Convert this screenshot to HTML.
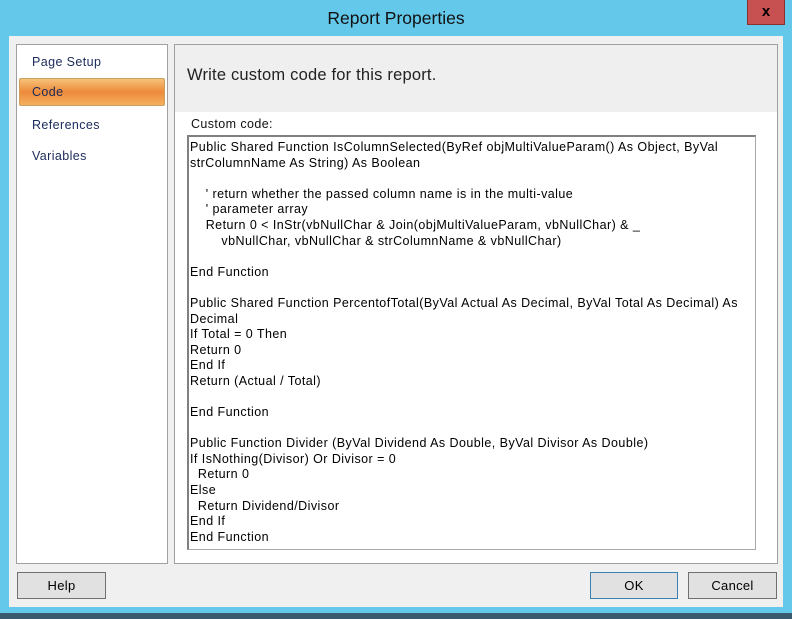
<!DOCTYPE html>
<html><head><meta charset="utf-8"><style>
*{margin:0;padding:0;box-sizing:border-box}
body{width:792px;height:619px;background:#63c8ea;position:relative;overflow:hidden;font-family:"Liberation Sans",sans-serif;color:#000}
.abs{position:absolute}
.title{left:0;width:792px;top:8px;text-align:center;font-size:17.5px;color:#111}
.close{left:747px;top:0;width:38px;height:25px;background:#c75050;border:1px solid #8a3030;border-top:none;text-align:center;font-size:15px;font-weight:bold;line-height:23px;color:#000}
.dlg{left:9px;top:36px;width:774px;height:571px;background:#f0f0f0}
.bottom{left:0;top:613px;width:792px;height:6px;background:#3a5a70}
.left{left:16px;top:44px;width:152px;height:520px;background:#fff;border:1px solid #a0a0a0}
.nav{position:absolute;left:15px;font-size:12.5px;letter-spacing:0.4px;color:#1a2a5a}
.sel{left:19px;top:78px;width:146px;height:28px;border:1px solid #c8a060;border-radius:2px;background:linear-gradient(#f7c27a,#ec8a3a 50%,#f5b060)}
.right{left:174px;top:44px;width:604px;height:520px;background:#fff;border:1px solid #a0a0a0}
.hdr{left:175px;top:45px;width:602px;height:67px;background:#efefef}
.code{left:187px;top:135px;width:569px;height:415px;border:1px solid #a8a8a8;border-top:2px solid #808080;border-left:2px solid #808080;background:#fff;font-size:12.5px;letter-spacing:0.45px;line-height:15.6px;padding:3px 0 0 1px;white-space:pre;color:#000;overflow:hidden}
.btn{height:27px;background:#e1e1e1;border:1px solid #707070;text-align:center;font-size:13px;letter-spacing:0.3px;line-height:25px}
</style></head><body>
<div class="abs title">Report Properties</div>
<div class="abs close">x</div>
<div class="abs dlg"></div>
<div class="abs bottom"></div>
<div class="abs left">
<div class="nav" style="top:10px">Page Setup</div>
<div class="nav" style="top:73px">References</div>
<div class="nav" style="top:104px">Variables</div>
</div>
<div class="abs sel"><span style="position:absolute;left:12px;top:6px;font-size:12.5px;letter-spacing:0.4px;color:#1a2a5a">Code</span></div>
<div class="abs right"></div>
<div class="abs hdr"><span style="position:absolute;left:12px;top:21px;font-size:16.5px;letter-spacing:0.2px;color:#222">Write custom code for this report.</span></div>
<div class="abs" style="left:191px;top:117px;font-size:12.5px;letter-spacing:0.4px;color:#111">Custom code:</div>
<div class="abs code">Public Shared Function IsColumnSelected(ByRef objMultiValueParam() As Object, ByVal
strColumnName As String) As Boolean

    ' return whether the passed column name is in the multi-value
    ' parameter array
    Return 0 &lt; InStr(vbNullChar &amp; Join(objMultiValueParam, vbNullChar) &amp; _
        vbNullChar, vbNullChar &amp; strColumnName &amp; vbNullChar)

End Function

Public Shared Function PercentofTotal(ByVal Actual As Decimal, ByVal Total As Decimal) As
Decimal
If Total = 0 Then
Return 0
End If
Return (Actual / Total)

End Function

Public Function Divider (ByVal Dividend As Double, ByVal Divisor As Double)
If IsNothing(Divisor) Or Divisor = 0
  Return 0
Else
  Return Dividend/Divisor
End If
End Function</div>
<div class="abs btn" style="left:17px;top:572px;width:89px">Help</div>
<div class="abs btn" style="left:590px;top:572px;width:88px;border-color:#3c7fb1">OK</div>
<div class="abs btn" style="left:688px;top:572px;width:89px">Cancel</div>
</body></html>
